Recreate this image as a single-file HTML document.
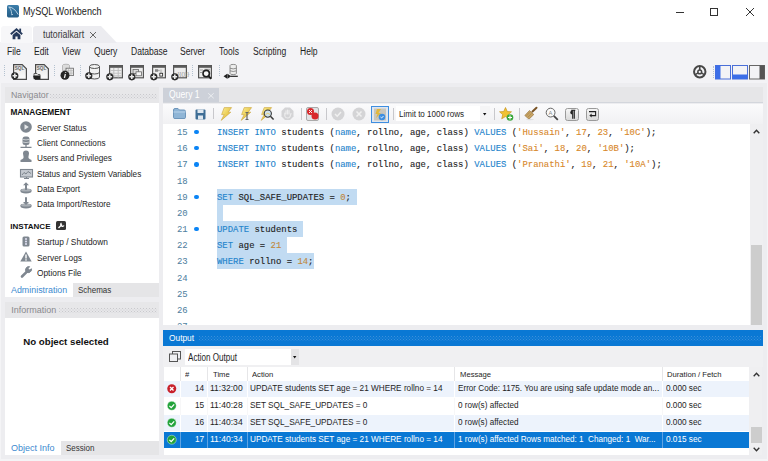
<!DOCTYPE html>
<html><head><meta charset="utf-8">
<style>
*{margin:0;padding:0;box-sizing:border-box}
html,body{width:768px;height:461px;overflow:hidden;background:#ebebee;font-family:"Liberation Sans",sans-serif;position:relative}
.a{position:absolute}
.t{position:absolute;white-space:nowrap}
svg{overflow:visible}
</style></head><body>
<div class="a" style="left:0px;top:0px;width:768px;height:26px;background:#ffffff;"></div>
<div class="a" style="left:0px;top:26px;width:768px;height:16px;background:#ffffff;"></div>
<div class="a" style="left:0px;top:42px;width:768px;height:41px;background:#f3f3f6;"></div>
<div class="a" style="left:0px;top:83px;width:768px;height:378px;background:#ededf0;"></div>
<div class="a" style="left:0px;top:83px;width:1.3px;height:378px;background:#f4f4f6;"></div>
<div class="a" style="left:0px;top:459px;width:768px;height:2px;background:#f4f4f6;"></div>
<div class="a" style="left:766.5px;top:83px;width:1.5px;height:378px;background:#f4f4f6;"></div>
<svg class="a" style="left:7px;top:5px;" width="12" height="12.4" viewBox="0 0 12 12.4"><defs><linearGradient id="lg0" x1="0" y1="0" x2="0" y2="1"><stop offset="0" stop-color="#3c7eab"/><stop offset="1" stop-color="#255d86"/></linearGradient></defs><rect x="0" y="0" width="12" height="12.4" rx="1.6" fill="url(#lg0)"/><path d="M1.6 2 Q7 2 11.2 9.6" stroke="#c9dcea" stroke-width="0.9" fill="none"/><path d="M2 2.2 Q3.8 4 4.4 6.5 Q4.6 9 4.8 10 L6 9.2" stroke="#c9dcea" stroke-width="0.8" fill="none"/></svg>
<div class="t" style="left:23px;top:6.46px;font-size:10.8px;line-height:10.8px;color:#1a1a1a;font-weight:400;font-family:'Liberation Sans',sans-serif;transform:scaleX(0.845);transform-origin:0 0;">MySQL Workbench</div>
<div class="a" style="left:676px;top:11.5px;width:8px;height:1px;background:#333;"></div>
<div class="a" style="left:710px;top:7.5px;width:8px;height:8px;background:transparent;border:1px solid #333;"></div>
<svg class="a" style="left:745px;top:7px;" width="10" height="10" viewBox="0 0 10 10"><path d="M1 1 L9 9 M9 1 L1 9" stroke="#333" stroke-width="1"/></svg>
<div class="a" style="left:1px;top:26px;width:31px;height:17px;background:#f7f7f9;border-radius:3px 3px 0 0;"></div>
<svg class="a" style="left:33px;top:26px;" width="85" height="17" viewBox="0 0 85 17"><path d="M0 3 Q0 0 3 0 L68 0 L84 17 L0 17 Z" fill="#ececf0"/></svg>
<svg class="a" style="left:10.3px;top:27.6px;" width="13" height="11.5" viewBox="0 0 13 11.5"><path d="M0.8 6.2 L6.5 1.2 L12.2 6.2" stroke="#263a5c" stroke-width="1.9" fill="none"/><rect x="9.3" y="0.6" width="1.8" height="3.4" fill="#263a5c"/><path d="M2.6 7 L6.5 3.7 L10.4 7 V11.3 H7.6 V8.6 H5.4 V11.3 H2.6 Z" fill="#263a5c"/></svg>
<div class="t" style="left:43px;top:29.54px;font-size:10px;line-height:10px;color:#3a3a3a;font-weight:400;font-family:'Liberation Sans',sans-serif;transform:scaleX(0.88);transform-origin:0 0;">tutorialkart</div>
<svg class="a" style="left:89px;top:31px;" width="8" height="8" viewBox="0 0 8 8"><path d="M1 1 L7 7 M7 1 L1 7" stroke="#666" stroke-width="1"/></svg>
<div class="t" style="left:6.6px;top:46.73px;font-size:10px;line-height:10px;color:#1e1e1e;font-weight:400;font-family:'Liberation Sans',sans-serif;transform:scaleX(0.855);transform-origin:0 0;">File</div>
<div class="t" style="left:34.0px;top:46.73px;font-size:10px;line-height:10px;color:#1e1e1e;font-weight:400;font-family:'Liberation Sans',sans-serif;transform:scaleX(0.855);transform-origin:0 0;">Edit</div>
<div class="t" style="left:62.1px;top:46.73px;font-size:10px;line-height:10px;color:#1e1e1e;font-weight:400;font-family:'Liberation Sans',sans-serif;transform:scaleX(0.855);transform-origin:0 0;">View</div>
<div class="t" style="left:93.6px;top:46.73px;font-size:10px;line-height:10px;color:#1e1e1e;font-weight:400;font-family:'Liberation Sans',sans-serif;transform:scaleX(0.855);transform-origin:0 0;">Query</div>
<div class="t" style="left:130.6px;top:46.73px;font-size:10px;line-height:10px;color:#1e1e1e;font-weight:400;font-family:'Liberation Sans',sans-serif;transform:scaleX(0.855);transform-origin:0 0;">Database</div>
<div class="t" style="left:180.1px;top:46.73px;font-size:10px;line-height:10px;color:#1e1e1e;font-weight:400;font-family:'Liberation Sans',sans-serif;transform:scaleX(0.855);transform-origin:0 0;">Server</div>
<div class="t" style="left:219.2px;top:46.73px;font-size:10px;line-height:10px;color:#1e1e1e;font-weight:400;font-family:'Liberation Sans',sans-serif;transform:scaleX(0.855);transform-origin:0 0;">Tools</div>
<div class="t" style="left:253.2px;top:46.73px;font-size:10px;line-height:10px;color:#1e1e1e;font-weight:400;font-family:'Liberation Sans',sans-serif;transform:scaleX(0.855);transform-origin:0 0;">Scripting</div>
<div class="t" style="left:299.6px;top:46.73px;font-size:10px;line-height:10px;color:#1e1e1e;font-weight:400;font-family:'Liberation Sans',sans-serif;transform:scaleX(0.855);transform-origin:0 0;">Help</div>
<div class="a" style="left:3.5px;top:64.5px;width:1px;height:11.0px;border-left:1px dotted #b4c2d0"></div>
<div class="a" style="left:54px;top:64.5px;width:1px;height:11.0px;border-left:1px dotted #b4c2d0"></div>
<div class="a" style="left:79.5px;top:64.5px;width:1px;height:11.0px;border-left:1px dotted #b4c2d0"></div>
<div class="a" style="left:192px;top:64.5px;width:1px;height:11.0px;border-left:1px dotted #b4c2d0"></div>
<div class="a" style="left:218.5px;top:64.5px;width:1px;height:11.0px;border-left:1px dotted #b4c2d0"></div>
<div class="a" style="left:713px;top:65.5px;width:1px;height:12.0px;border-left:1px dotted #b4c2d0"></div>
<svg class="a" style="left:13.2px;top:64px;" width="14" height="16" viewBox="0 0 14 16"><defs><linearGradient id="dg" x1="0" y1="0" x2="0" y2="1"><stop offset="0" stop-color="#e6e6e6"/><stop offset="1" stop-color="#fafafa"/></linearGradient></defs><path d="M0.6 0.6 L9.2 0.6 L13.4 4.8 L13.4 15.4 L0.6 15.4 Z" fill="url(#dg)" stroke="#4a4a4a" stroke-width="1.2"/><text x="1.8" y="5.6" font-size="4.6" font-weight="bold" font-family="Liberation Sans" fill="#666">SQL</text></svg>
<svg class="a" style="left:11.4px;top:71.8px;" width="7.6" height="7.6" viewBox="0 0 7.6 7.6"><circle cx="3.8" cy="3.8" r="3.5999999999999996" fill="#2a2a2a"/><path d="M3.8 1.5 V6.1 M1.5 3.8 H6.1" stroke="#e8e8e8" stroke-width="1.6"/></svg>
<svg class="a" style="left:34.6px;top:64px;" width="14" height="16" viewBox="0 0 14 16"><defs><linearGradient id="dg" x1="0" y1="0" x2="0" y2="1"><stop offset="0" stop-color="#e6e6e6"/><stop offset="1" stop-color="#fafafa"/></linearGradient></defs><path d="M0.6 0.6 L9.2 0.6 L13.4 4.8 L13.4 15.4 L0.6 15.4 Z" fill="url(#dg)" stroke="#4a4a4a" stroke-width="1.2"/><text x="1.8" y="5.6" font-size="4.6" font-weight="bold" font-family="Liberation Sans" fill="#666">SQL</text></svg>
<svg class="a" style="left:33px;top:72.5px;" width="8" height="6.5" viewBox="0 0 8 6.5"><path d="M1 0.5 H4 L5 1.5 H7 V3 H1 Z" fill="#e6e6e6" stroke="#333" stroke-width="0.7"/><path d="M0 2.8 H7.5 V6.3 H0.8 Z" fill="#222"/></svg>
<svg class="a" style="left:59.5px;top:64px;" width="14" height="16" viewBox="0 0 14 16"><path d="M2.5 1.5 Q2.5 0.2 6 0.2 Q9.5 0.2 9.5 1.5 V6.5 H2.5 Z" fill="#dcdcdc" stroke="#999" stroke-width="0.6"/><rect x="6" y="4.2" width="7.4" height="7.4" fill="#eaeaea" stroke="#666" stroke-width="0.8"/><path d="M8.5 4.5 V11.5 M11 4.5 V11.5 M6 6.7 H13.4 M6 9.1 H13.4" stroke="#aaa" stroke-width="0.6"/><circle cx="5" cy="11.2" r="4.5" fill="#262626"/><path d="M5.6 8.2 V8.9 M5.4 10 L4.4 14" stroke="#f0f0f0" stroke-width="1.3"/></svg>
<svg class="a" style="left:86px;top:64px;" width="15" height="16" viewBox="0 0 15 16"><path d="M3.5 2.5 Q3.5 0.5 8.5 0.5 Q13.5 0.5 13.5 2.5 V13 Q13.5 15 8.5 15 Q3.5 15 3.5 13 Z" fill="#f2f2f2" stroke="#555"/><path d="M3.5 2.5 Q3.5 4.5 8.5 4.5 Q13.5 4.5 13.5 2.5 M3.5 8 Q3.5 10 8.5 10 Q13.5 10 13.5 8" fill="none" stroke="#555"/></svg>
<svg class="a" style="left:85.4px;top:72px;" width="7.6" height="7.6" viewBox="0 0 7.6 7.6"><circle cx="3.8" cy="3.8" r="3.5999999999999996" fill="#2a2a2a"/><path d="M3.8 1.5 V6.1 M1.5 3.8 H6.1" stroke="#e8e8e8" stroke-width="1.6"/></svg>
<svg class="a" style="left:109px;top:65px;" width="14" height="13" viewBox="0 0 14 13"><rect x="0.6" y="0.6" width="12.8" height="12.2" fill="#ededed" stroke="#555" stroke-width="1.2"/><rect x="0.6" y="0.6" width="12.8" height="2.2" fill="#5a5a5a"/><path d="M1.5 5.5 H12.5 M1.5 8.2 H12.5 M1.5 10.9 H12.5" stroke="#c4c4c4" stroke-width="1.1"/><path d="M4.8 3 V12.5 M9.2 3 V12.5" stroke="#bdbdbd" stroke-width="1"/></svg>
<svg class="a" style="left:106.4px;top:72.6px;" width="7.6" height="7.6" viewBox="0 0 7.6 7.6"><circle cx="3.8" cy="3.8" r="3.5999999999999996" fill="#2a2a2a"/><path d="M3.8 1.5 V6.1 M1.5 3.8 H6.1" stroke="#e8e8e8" stroke-width="1.6"/></svg>
<svg class="a" style="left:130.2px;top:65px;" width="14" height="13" viewBox="0 0 14 13"><rect x="0.6" y="0.6" width="12.8" height="12.2" fill="#ededed" stroke="#555" stroke-width="1.2"/><rect x="0.6" y="0.6" width="12.8" height="2.2" fill="#5a5a5a"/><rect x="3" y="4.5" width="5.5" height="4" fill="#dcdcdc" stroke="#666" stroke-width="0.8"/><rect x="6" y="6.8" width="5.5" height="4" fill="#f4f4f4" stroke="#666" stroke-width="0.8"/></svg>
<svg class="a" style="left:128.1px;top:72.6px;" width="7.6" height="7.6" viewBox="0 0 7.6 7.6"><circle cx="3.8" cy="3.8" r="3.5999999999999996" fill="#2a2a2a"/><path d="M3.8 1.5 V6.1 M1.5 3.8 H6.1" stroke="#e8e8e8" stroke-width="1.6"/></svg>
<svg class="a" style="left:152.2px;top:65px;" width="14" height="13" viewBox="0 0 14 13"><rect x="0.6" y="0.6" width="12.8" height="12.2" fill="#ededed" stroke="#555" stroke-width="1.2"/><rect x="0.6" y="0.6" width="12.8" height="2.2" fill="#5a5a5a"/><rect x="3" y="4.2" width="3.2" height="2.6" fill="#888"/><rect x="7.6" y="4.4" width="2.6" height="2.4" fill="#c8c8c8"/><path d="M6.2 5.5 H7.6 M9 6.8 V8.3" stroke="#888" stroke-width="0.7"/><rect x="7.8" y="8.3" width="2.8" height="2.8" fill="#fff" stroke="#333" stroke-width="0.9"/></svg>
<svg class="a" style="left:149.8px;top:72.6px;" width="7.6" height="7.6" viewBox="0 0 7.6 7.6"><circle cx="3.8" cy="3.8" r="3.5999999999999996" fill="#2a2a2a"/><path d="M3.8 1.5 V6.1 M1.5 3.8 H6.1" stroke="#e8e8e8" stroke-width="1.6"/></svg>
<svg class="a" style="left:173.3px;top:65px;" width="14" height="13" viewBox="0 0 14 13"><rect x="0.6" y="0.6" width="12.8" height="12.2" fill="#ededed" stroke="#555" stroke-width="1.2"/><rect x="0.6" y="0.6" width="12.8" height="2.2" fill="#5a5a5a"/><text x="4.2" y="10.6" font-size="6" font-family="Liberation Sans" fill="#888">{{()}}</text></svg>
<svg class="a" style="left:170.9px;top:72.6px;" width="7.6" height="7.6" viewBox="0 0 7.6 7.6"><circle cx="3.8" cy="3.8" r="3.5999999999999996" fill="#2a2a2a"/><path d="M3.8 1.5 V6.1 M1.5 3.8 H6.1" stroke="#e8e8e8" stroke-width="1.6"/></svg>
<svg class="a" style="left:198px;top:65px;" width="14" height="15" viewBox="0 0 14 15"><rect x="0.6" y="0.6" width="12.8" height="12.2" fill="#ededed" stroke="#555" stroke-width="1.2"/><rect x="0.6" y="0.6" width="12.8" height="2.2" fill="#5a5a5a"/><path d="M2 5 H5 M2 7.5 H4 M6.5 4.3 H12" stroke="#888" stroke-width="0.8"/><circle cx="8.2" cy="8.6" r="3.2" fill="#f8f8f8" stroke="#1e1e1e" stroke-width="1.6"/><path d="M10.4 10.9 L13.2 13.8" stroke="#1e1e1e" stroke-width="1.8"/></svg>
<svg class="a" style="left:223px;top:64px;" width="15" height="16" viewBox="0 0 15 16"><path d="M7 1.6 Q7 0.4 10.2 0.4 Q13.4 0.4 13.4 1.6 V9.4 Q13.4 10.6 10.2 10.6 Q7 10.6 7 9.4 Z" fill="#ededed" stroke="#777" stroke-width="0.8"/><path d="M7 4.2 Q10.2 5.6 13.4 4.2 M7 6.8 Q10.2 8.2 13.4 6.8" fill="none" stroke="#777" stroke-width="0.8"/><path d="M0.5 12.3 L4.2 9.8 V14.8 Z M8.2 12.3 L4.5 9.8 V14.8 Z" fill="#222"/><path d="M7.5 12.3 H14.8" stroke="#222" stroke-width="1.2"/></svg>
<svg class="a" style="left:693px;top:65px;" width="13.5" height="13.5" viewBox="0 0 13.5 13.5"><circle cx="6.75" cy="6.75" r="5.7" fill="none" stroke="#474747" stroke-width="2"/><circle cx="6.75" cy="6.9" r="1.9" fill="#f3f3f6" stroke="#474747" stroke-width="1.5"/><path d="M6.75 1.5 V5 M2.2 9.6 L5.2 7.9 M11.3 9.6 L8.3 7.9" stroke="#474747" stroke-width="1.6"/></svg>
<svg class="a" style="left:715px;top:65px;" width="17" height="15" viewBox="0 0 17 15"><rect x="0.5" y="0.5" width="15" height="13.5" fill="#f3f3f6" stroke="#4a6fd8"/><rect x="0.5" y="0.5" width="5" height="13.5" fill="#3c6ee8"/></svg>
<svg class="a" style="left:732px;top:65px;" width="17" height="15" viewBox="0 0 17 15"><rect x="0.5" y="0.5" width="15" height="13.5" fill="#f3f3f6" stroke="#4a6fd8"/><rect x="0.5" y="9.5" width="15" height="4.5" fill="#3c6ee8"/></svg>
<svg class="a" style="left:749px;top:65px;" width="17" height="15" viewBox="0 0 17 15"><rect x="0.5" y="0.5" width="15" height="13.5" fill="#f3f3f6" stroke="#666"/><rect x="10.5" y="0.5" width="5" height="13.5" fill="#555"/></svg>
<div class="a" style="left:5px;top:87.3px;width:154px;height:15.7px;background:#e7e7e9;"></div>
<svg class="a" style="left:49.5px;top:93.5px" width="107" height="5"><defs><pattern id="p54" width="3" height="3" patternUnits="userSpaceOnUse"><rect x="0" y="0" width="1" height="1" fill="#c9c9cd"/><rect x="1.5" y="1.5" width="1" height="1" fill="#c9c9cd"/></pattern></defs><rect width="107" height="5" fill="url(#p54)"/></svg>
<div class="t" style="left:11px;top:90.75px;font-size:8.8px;line-height:8.8px;color:#8a8a8e;font-weight:400;font-family:'Liberation Sans',sans-serif;">Navigator</div>
<div class="a" style="left:5px;top:103px;width:154px;height:180px;background:#ffffff;"></div>
<div class="t" style="left:10.4px;top:107.87px;font-size:8.3px;line-height:8.3px;color:#111;font-weight:700;font-family:'Liberation Sans',sans-serif;">MANAGEMENT</div>
<div class="t" style="left:37px;top:124.22px;font-size:8.6px;line-height:8.6px;color:#1e1e1e;font-weight:400;font-family:'Liberation Sans',sans-serif;transform:scaleX(0.95);transform-origin:0 0;">Server Status</div>
<div class="t" style="left:37px;top:139.12px;font-size:8.6px;line-height:8.6px;color:#1e1e1e;font-weight:400;font-family:'Liberation Sans',sans-serif;transform:scaleX(0.95);transform-origin:0 0;">Client Connections</div>
<div class="t" style="left:37px;top:154.02px;font-size:8.6px;line-height:8.6px;color:#1e1e1e;font-weight:400;font-family:'Liberation Sans',sans-serif;transform:scaleX(0.95);transform-origin:0 0;">Users and Privileges</div>
<div class="t" style="left:37px;top:169.72px;font-size:8.6px;line-height:8.6px;color:#1e1e1e;font-weight:400;font-family:'Liberation Sans',sans-serif;transform:scaleX(0.95);transform-origin:0 0;">Status and System Variables</div>
<div class="t" style="left:37px;top:184.92px;font-size:8.6px;line-height:8.6px;color:#1e1e1e;font-weight:400;font-family:'Liberation Sans',sans-serif;transform:scaleX(0.95);transform-origin:0 0;">Data Export</div>
<div class="t" style="left:37px;top:200.32px;font-size:8.6px;line-height:8.6px;color:#1e1e1e;font-weight:400;font-family:'Liberation Sans',sans-serif;transform:scaleX(0.95);transform-origin:0 0;">Data Import/Restore</div>
<div class="t" style="left:10.2px;top:222.63px;font-size:8px;line-height:8px;color:#111;font-weight:700;font-family:'Liberation Sans',sans-serif;">INSTANCE</div>
<div class="t" style="left:37px;top:238.42px;font-size:8.6px;line-height:8.6px;color:#1e1e1e;font-weight:400;font-family:'Liberation Sans',sans-serif;transform:scaleX(0.97);transform-origin:0 0;">Startup / Shutdown</div>
<div class="t" style="left:37px;top:253.72px;font-size:8.6px;line-height:8.6px;color:#1e1e1e;font-weight:400;font-family:'Liberation Sans',sans-serif;transform:scaleX(0.97);transform-origin:0 0;">Server Logs</div>
<div class="t" style="left:37px;top:269.02px;font-size:8.6px;line-height:8.6px;color:#1e1e1e;font-weight:400;font-family:'Liberation Sans',sans-serif;transform:scaleX(0.97);transform-origin:0 0;">Options File</div>
<svg class="a" style="left:20px;top:121px;" width="12" height="12" viewBox="0 0 12 12"><circle cx="6" cy="6" r="5.8" fill="#7f8790"/><path d="M4.5 3.3 L8.8 6 L4.5 8.7 Z" fill="#e6e8ea"/></svg>
<svg class="a" style="left:20px;top:135.5px;" width="12" height="13" viewBox="0 0 12 13"><rect x="2.5" y="0.5" width="7" height="8.5" rx="2.5" fill="#7f8790"/><path d="M2.5 3.3 Q6 4.5 9.5 3.3 M2.5 6 Q6 7.2 9.5 6" stroke="#e4e6e8" stroke-width="0.7" fill="none"/><path d="M6 9 V11 M0.5 11.3 H11.5" stroke="#7f8790" stroke-width="1.3"/></svg>
<svg class="a" style="left:20px;top:150px;" width="12" height="13" viewBox="0 0 12 13"><circle cx="6" cy="3.5" r="3" fill="#7f8790"/><path d="M3.5 5 Q4 8 2.5 9 L0.5 10 V12 H11.5 V10 L9.5 9 Q8 8 8.5 5 Z" fill="#7f8790"/></svg>
<svg class="a" style="left:19.6px;top:168.5px;" width="13" height="10" viewBox="0 0 13 10"><rect x="0.5" y="0.5" width="12" height="7.5" fill="#c5cad0" stroke="#7f8790" stroke-width="1.1"/><path d="M2 6 L4 3.5 L6 5 L8 2.5 L11 4.5" stroke="#6a727b" stroke-width="0.8" fill="none"/><path d="M6.5 8 V9.2 M4 9.5 H9" stroke="#7f8790" stroke-width="1.1"/></svg>
<svg class="a" style="left:20px;top:181.5px;" width="12" height="12" viewBox="0 0 12 12"><path d="M0.5 8.2 Q0.5 6.6 6 6.6 Q11.5 6.6 11.5 8.2 V9.6 Q11.5 11.4 6 11.4 Q0.5 11.4 0.5 9.6 Z" fill="#7f8790"/><ellipse cx="6" cy="8.2" rx="5" ry="1.4" fill="#aab0b6"/><path d="M6 0.3 L9 3.3 H7 V8 H5 V3.3 H3 Z" fill="#7f8790"/></svg>
<svg class="a" style="left:20px;top:196.5px;" width="12" height="12" viewBox="0 0 12 12"><path d="M0.5 8.2 Q0.5 6.6 6 6.6 Q11.5 6.6 11.5 8.2 V9.6 Q11.5 11.4 6 11.4 Q0.5 11.4 0.5 9.6 Z" fill="#7f8790"/><ellipse cx="6" cy="8.2" rx="5" ry="1.4" fill="#aab0b6"/><path d="M6 8 L9 5 H7 V0.3 H5 V5 H3 Z" fill="#7f8790"/></svg>
<svg class="a" style="left:55.5px;top:221px;" width="10" height="9" viewBox="0 0 10 9"><rect x="0" y="0" width="10" height="9" rx="1.5" fill="#333"/><path d="M2.5 7 L6 3.5 M5.5 2 A1.8 1.8 0 1 0 8 4.5" stroke="#fff" stroke-width="1.3" fill="none"/></svg>
<svg class="a" style="left:21.5px;top:236px;" width="8" height="11" viewBox="0 0 8 11"><rect x="0.5" y="0.5" width="7" height="10" rx="1.5" fill="#7f8790"/><circle cx="4" cy="3" r="1.1" fill="#dde"/><circle cx="4" cy="5.5" r="1.1" fill="#dde"/><circle cx="4" cy="8" r="1.1" fill="#dde"/></svg>
<svg class="a" style="left:20px;top:251px;" width="12" height="11" viewBox="0 0 12 11"><path d="M6 0.5 L11.7 10.5 H0.3 Z" fill="#7f8790"/><rect x="5.3" y="3.5" width="1.4" height="4" fill="#fff"/><rect x="5.3" y="8.3" width="1.4" height="1.3" fill="#fff"/></svg>
<svg class="a" style="left:19.7px;top:265.9px;" width="13" height="12" viewBox="0 0 13 12"><path d="M2 10.5 L7.2 5.3" stroke="#7f8790" stroke-width="2.6" stroke-linecap="round"/><path d="M6.2 6 A3.4 3.4 0 0 1 9.6 0.6 L8.2 2.6 L9.4 4 L11.6 2.8 A3.4 3.4 0 0 1 6.2 6 Z" fill="#7f8790" stroke="#7f8790" stroke-width="0.9" stroke-linejoin="round"/></svg>
<div class="a" style="left:5px;top:283px;width:68px;height:14px;background:#ffffff;"></div>
<div class="a" style="left:73px;top:283px;width:86px;height:14px;background:#e5e5e7;"></div>
<div class="t" style="left:11px;top:285.57px;font-size:8.9px;line-height:8.9px;color:#3d8ad0;font-weight:400;font-family:'Liberation Sans',sans-serif;">Administration</div>
<div class="t" style="left:78.4px;top:285.82px;font-size:8.6px;line-height:8.6px;color:#333;font-weight:400;font-family:'Liberation Sans',sans-serif;transform:scaleX(0.93);transform-origin:0 0;">Schemas</div>
<div class="a" style="left:5px;top:302px;width:154px;height:15.5px;background:#e7e7e9;"></div>
<svg class="a" style="left:59px;top:308px" width="98" height="5"><defs><pattern id="p83" width="3" height="3" patternUnits="userSpaceOnUse"><rect x="0" y="0" width="1" height="1" fill="#c9c9cd"/><rect x="1.5" y="1.5" width="1" height="1" fill="#c9c9cd"/></pattern></defs><rect width="98" height="5" fill="url(#p83)"/></svg>
<div class="t" style="left:11.2px;top:305.68px;font-size:9px;line-height:9px;color:#8a8a8e;font-weight:400;font-family:'Liberation Sans',sans-serif;">Information</div>
<div class="a" style="left:5px;top:317.5px;width:154px;height:124px;background:#ffffff;"></div>
<div class="t" style="left:23.2px;top:336.69px;font-size:9.7px;line-height:9.7px;color:#111;font-weight:700;font-family:'Liberation Sans',sans-serif;">No object selected</div>
<div class="a" style="left:5px;top:441px;width:56px;height:14px;background:#ffffff;"></div>
<div class="a" style="left:61px;top:441px;width:98px;height:14px;background:#e5e5e7;"></div>
<div class="t" style="left:11px;top:443.78px;font-size:9px;line-height:9px;color:#3d8ad0;font-weight:400;font-family:'Liberation Sans',sans-serif;">Object Info</div>
<div class="t" style="left:66.4px;top:444.12px;font-size:8.6px;line-height:8.6px;color:#333;font-weight:400;font-family:'Liberation Sans',sans-serif;transform:scaleX(0.93);transform-origin:0 0;">Session</div>
<div class="a" style="left:163px;top:87.3px;width:599.5px;height:15.5px;background:#e6e6e8;"></div>
<div class="a" style="left:163.4px;top:87.5px;width:55.8px;height:15.2px;background:#cdd1d9;"></div>
<div class="t" style="left:168.8px;top:89.77px;font-size:10.2px;line-height:10.2px;color:#ffffff;font-weight:400;font-family:'Liberation Sans',sans-serif;transform:scaleX(0.845);transform-origin:0 0;">Query 1</div>
<svg class="a" style="left:208.3px;top:92.9px;" width="6" height="5.5" viewBox="0 0 6 5.5"><path d="M0.3 0.3 L5.7 5.2 M5.7 0.3 L0.3 5.2" stroke="#eef0f3" stroke-width="0.9"/></svg>
<div class="a" style="left:163px;top:102.3px;width:599.5px;height:1.2px;background:#d3d6dc;"></div>
<div class="a" style="left:163px;top:103.5px;width:599.5px;height:20.5px;background:linear-gradient(#fbfbfc,#f1f1f3)"></div>
<svg class="a" style="left:173px;top:108px;" width="13" height="11" viewBox="0 0 13 11"><path d="M0.5 2 Q0.5 0.5 2 0.5 H5 L6.5 2 H11 Q12.5 2 12.5 3.5 V9.5 Q12.5 10.5 11 10.5 H2 Q0.5 10.5 0.5 9.5 Z" fill="#8fb5d6" stroke="#6e96bb"/><path d="M0.5 4 H12.5" stroke="#b9d3ea"/></svg>
<svg class="a" style="left:194.5px;top:109px;" width="11" height="11" viewBox="0 0 11 11"><rect x="0.5" y="0.5" width="10" height="10" rx="1" fill="#3f6e96"/><rect x="2.5" y="0.5" width="6" height="3.5" fill="#dfe8f0"/><rect x="3" y="6.5" width="5" height="4" fill="#dfe8f0"/></svg>
<div class="a" style="left:213px;top:108px;width:1px;height:11px;background:#c8c8cc;"></div>
<svg class="a" style="left:220px;top:107px;" width="13" height="14" viewBox="0 0 13 14"><defs><linearGradient id="bg1" x1="0" y1="0" x2="1" y2="1"><stop offset="0" stop-color="#fbef9a"/><stop offset="0.6" stop-color="#e9c84a"/><stop offset="1" stop-color="#c9a02a"/></linearGradient></defs><path d="M4.2 0.6 H11.6 L8.2 5.2 H10.8 L1.2 13.4 L4.2 7.6 H1.6 Z" fill="url(#bg1)" stroke="#c9a23a" stroke-width="0.6"/></svg>
<svg class="a" style="left:240px;top:107px;" width="13" height="14" viewBox="0 0 13 14"><defs><linearGradient id="bg1" x1="0" y1="0" x2="1" y2="1"><stop offset="0" stop-color="#fbef9a"/><stop offset="0.6" stop-color="#e9c84a"/><stop offset="1" stop-color="#c9a02a"/></linearGradient></defs><path d="M4.2 0.6 H11.6 L8.2 5.2 H10.8 L1.2 13.4 L4.2 7.6 H1.6 Z" fill="url(#bg1)" stroke="#c9a23a" stroke-width="0.6"/><path d="M5.5 5.5 H8.5 M7 5.5 V12.5 M5.5 12.5 H8.5" stroke="#666" stroke-width="1.2"/></svg>
<svg class="a" style="left:260px;top:107px;" width="15" height="14" viewBox="0 0 15 14"><defs><linearGradient id="bg1" x1="0" y1="0" x2="1" y2="1"><stop offset="0" stop-color="#fbef9a"/><stop offset="0.6" stop-color="#e9c84a"/><stop offset="1" stop-color="#c9a02a"/></linearGradient></defs><path d="M4.2 0.6 H11.6 L8.2 5.2 H10.8 L1.2 13.4 L4.2 7.6 H1.6 Z" fill="url(#bg1)" stroke="#c9a23a" stroke-width="0.6"/><circle cx="7.8" cy="6.6" r="3.6" fill="#cfe2ee" stroke="#3a3a3a" stroke-width="1.1"/><path d="M5.5 7.5 Q7.8 5 10 7.5" stroke="#e8d070" stroke-width="1" fill="none"/><path d="M10.4 9.3 L13.6 12.6" stroke="#3a3a3a" stroke-width="1.5"/></svg>
<svg class="a" style="left:281px;top:107px;" width="13" height="14" viewBox="0 0 13 14"><path d="M4 0.5 H9 L12.5 4 V9.5 L9 13 H4 L0.5 9.5 V4 Z" fill="#d4d4d6"/><path d="M3.8 6 V9 Q4.2 11 6.5 11 Q9 11 9.2 9 L10 6.5 M5 3.8 V7 M6.5 3 V7 M8 3.5 V7" stroke="#ededee" stroke-width="1.1" fill="none" stroke-linecap="round"/></svg>
<div class="a" style="left:301px;top:108px;width:1px;height:12px;background:#c8c8cc;"></div>
<svg class="a" style="left:306px;top:107px;" width="13" height="14" viewBox="0 0 13 14"><rect x="0.5" y="0.5" width="12" height="13" rx="1.5" fill="#e2e2e4" stroke="#aaa"/><circle cx="4.5" cy="4.5" r="3.5" fill="#d8282b"/><circle cx="9" cy="9" r="3.5" fill="#d8282b"/><path d="M3 3 L6 6 M6 3 L3 6" stroke="#fff" stroke-width="0.9"/></svg>
<div class="a" style="left:326px;top:108px;width:1px;height:12px;background:#c8c8cc;"></div>
<svg class="a" style="left:331px;top:107px;" width="14" height="14" viewBox="0 0 14 14"><circle cx="7" cy="7" r="6.5" fill="#d4d4d6"/><path d="M4 7 L6.2 9.2 L10 5" stroke="#f0f0f0" stroke-width="1.5" fill="none"/></svg>
<svg class="a" style="left:352px;top:107px;" width="14" height="14" viewBox="0 0 14 14"><circle cx="7" cy="7" r="6.5" fill="#d4d4d6"/><path d="M4.5 4.5 L9.5 9.5 M9.5 4.5 L4.5 9.5" stroke="#f0f0f0" stroke-width="1.5"/></svg>
<svg class="a" style="left:371px;top:106px;" width="18" height="17" viewBox="0 0 18 17"><rect x="0.5" y="0.5" width="17" height="16" fill="#dfe6ef" stroke="#3e8ee0"/><rect x="3" y="2.5" width="12" height="12" fill="#c9c6bd"/><path d="M6 3 H10 L7.5 7 H10 L5 12 L6.5 8 H4.5 Z" fill="#e0b83e"/><circle cx="11" cy="11" r="3.3" fill="#3e8ee0"/><path d="M9.5 11 L10.6 12 L12.5 10" stroke="#fff" stroke-width="0.9" fill="none"/></svg>
<div class="a" style="left:393px;top:108px;width:1px;height:12px;background:#c8c8cc;"></div>
<div class="a" style="left:396.4px;top:105.6px;width:93.2px;height:15.7px;background:#ffffff;"></div>
<div class="a" style="left:480px;top:105.6px;width:9.6px;height:15.7px;background:#f5f5f6;"></div>
<div class="t" style="left:399px;top:109.47px;font-size:9.6px;line-height:9.6px;color:#1e1e1e;font-weight:400;font-family:'Liberation Sans',sans-serif;transform:scaleX(0.835);transform-origin:0 0;">Limit to 1000 rows</div>
<svg class="a" style="left:482.6px;top:112.8px;" width="3.4" height="2.4" viewBox="0 0 3.4 2.4"><path d="M0 0 H3.4 L1.7 2.4 Z" fill="#111"/></svg>
<div class="a" style="left:493.5px;top:108px;width:1px;height:12px;background:#c8c8cc;"></div>
<svg class="a" style="left:499px;top:107px;" width="15" height="14" viewBox="0 0 15 14"><path d="M6.5 0.5 L8.3 4.5 L12.5 4.8 L9.3 7.6 L10.3 11.8 L6.5 9.6 L2.7 11.8 L3.7 7.6 L0.5 4.8 L4.7 4.5 Z" fill="#f0c232" stroke="#c08a10" stroke-width="0.6"/><circle cx="11" cy="10.5" r="3.3" fill="#3aa83a"/><path d="M11 8.5 V12.5 M9 10.5 H13" stroke="#fff" stroke-width="1.1"/></svg>
<div class="a" style="left:519px;top:108px;width:1px;height:12px;background:#c8c8cc;"></div>
<svg class="a" style="left:524px;top:107px;" width="14" height="13" viewBox="0 0 14 13"><path d="M8.5 4.5 L12.5 0.8" stroke="#7a5426" stroke-width="2" stroke-linecap="round"/><path d="M0.8 8.5 L5.5 3.5 L9.8 7.5 L5 12.2 Z" fill="#c8a464" stroke="#8f6b36" stroke-width="0.6"/><path d="M2.5 8.8 L6 5.2 M4 10 L7.5 6.4" stroke="#a5834a" stroke-width="0.6"/><ellipse cx="6" cy="12.6" rx="4" ry="0.6" fill="#ddd"/></svg>
<svg class="a" style="left:544.5px;top:107px;" width="14" height="14" viewBox="0 0 14 14"><circle cx="5.6" cy="5.6" r="4.4" fill="#fafafa" stroke="#666" stroke-width="1"/><text x="3.4" y="7.9" font-size="5.8" font-family="Liberation Sans" fill="#888">A</text><path d="M8.8 8.8 L12.8 12.8" stroke="#444" stroke-width="1.8"/></svg>
<svg class="a" style="left:565px;top:108px;" width="14" height="13" viewBox="0 0 14 13"><defs><linearGradient id="btg" x1="0" y1="0" x2="0" y2="1"><stop offset="0" stop-color="#f6f6f6"/><stop offset="1" stop-color="#d9d9d9"/></linearGradient></defs><rect x="0.5" y="0.5" width="13" height="12" rx="2" fill="url(#btg)" stroke="#9a9a9a"/><path d="M6.2 2.3 H10.3 M7.7 2.3 V10.8 M9.3 2.3 V10.8" stroke="#222" stroke-width="1.1"/><path d="M7.4 2.3 A2.1 2.1 0 0 0 7.4 6.5 Z" fill="#222"/></svg>
<svg class="a" style="left:586px;top:108px;" width="13" height="13" viewBox="0 0 13 13"><rect x="0.5" y="0.5" width="12" height="12" rx="2" fill="url(#btg)" stroke="#9a9a9a"/><path d="M3 3.6 H9.6 V7.6 H4.6" stroke="#222" stroke-width="1.1" fill="none"/><path d="M5.6 5.6 L3.4 7.6 L5.6 9.6 Z" fill="#222"/></svg>
<div class="a" style="left:163px;top:124px;width:587px;height:200.5px;background:#ffffff;"></div>
<div class="a" style="left:750px;top:124px;width:12.5px;height:201px;background:#efeff1;"></div>
<svg class="a" style="left:753px;top:128.5px;" width="7" height="5" viewBox="0 0 7 5"><path d="M0.7 4.3 L3.5 1.2 L6.3 4.3" stroke="#333" stroke-width="1.4" fill="none"/></svg>
<div class="a" style="left:750.5px;top:245px;width:11.2px;height:80px;background:#cdcdcd;"></div>
<div class="t" style="left:177.2px;top:128.04px;font-size:9.6px;line-height:9.6px;color:#4f7f9f;font-weight:400;font-family:'Liberation Mono',monospace;transform:scaleX(0.9306);transform-origin:0 0;-webkit-text-stroke:0.05px currentColor;">15</div>
<div class="t" style="left:217.4px;top:128.04px;font-size:9.6px;line-height:9.6px;color:#1c1c1c;font-weight:400;font-family:'Liberation Mono',monospace;transform:scaleX(0.9306);transform-origin:0 0;white-space:pre;-webkit-text-stroke:0.12px currentColor;"><span style="color:#2484cc">INSERT INTO</span><span style="color:#1c1c1c"> students (</span><span style="color:#2484cc">name</span><span style="color:#1c1c1c">, rollno, age, class) </span><span style="color:#2484cc">VALUES</span><span style="color:#1c1c1c"> (</span><span style="color:#d8892c">&#x27;Hussain&#x27;</span><span style="color:#1c1c1c">, </span><span style="color:#d8892c">17</span><span style="color:#1c1c1c">, </span><span style="color:#d8892c">23</span><span style="color:#1c1c1c">, </span><span style="color:#d8892c">&#x27;10C&#x27;</span><span style="color:#1c1c1c">);</span></div>
<div class="a" style="left:194.3px;top:129.90px;width:4.4px;height:4.4px;border-radius:50%;background:#0a84f5"></div>
<div class="t" style="left:177.2px;top:144.22px;font-size:9.6px;line-height:9.6px;color:#4f7f9f;font-weight:400;font-family:'Liberation Mono',monospace;transform:scaleX(0.9306);transform-origin:0 0;-webkit-text-stroke:0.05px currentColor;">16</div>
<div class="t" style="left:217.4px;top:144.22px;font-size:9.6px;line-height:9.6px;color:#1c1c1c;font-weight:400;font-family:'Liberation Mono',monospace;transform:scaleX(0.9306);transform-origin:0 0;white-space:pre;-webkit-text-stroke:0.12px currentColor;"><span style="color:#2484cc">INSERT INTO</span><span style="color:#1c1c1c"> students (</span><span style="color:#2484cc">name</span><span style="color:#1c1c1c">, rollno, age, class) </span><span style="color:#2484cc">VALUES</span><span style="color:#1c1c1c"> (</span><span style="color:#d8892c">&#x27;Sai&#x27;</span><span style="color:#1c1c1c">, </span><span style="color:#d8892c">18</span><span style="color:#1c1c1c">, </span><span style="color:#d8892c">20</span><span style="color:#1c1c1c">, </span><span style="color:#d8892c">&#x27;10B&#x27;</span><span style="color:#1c1c1c">);</span></div>
<div class="a" style="left:194.3px;top:146.08px;width:4.4px;height:4.4px;border-radius:50%;background:#0a84f5"></div>
<div class="t" style="left:177.2px;top:160.40px;font-size:9.6px;line-height:9.6px;color:#4f7f9f;font-weight:400;font-family:'Liberation Mono',monospace;transform:scaleX(0.9306);transform-origin:0 0;-webkit-text-stroke:0.05px currentColor;">17</div>
<div class="t" style="left:217.4px;top:160.40px;font-size:9.6px;line-height:9.6px;color:#1c1c1c;font-weight:400;font-family:'Liberation Mono',monospace;transform:scaleX(0.9306);transform-origin:0 0;white-space:pre;-webkit-text-stroke:0.12px currentColor;"><span style="color:#2484cc">INSERT INTO</span><span style="color:#1c1c1c"> students (</span><span style="color:#2484cc">name</span><span style="color:#1c1c1c">, rollno, age, class) </span><span style="color:#2484cc">VALUES</span><span style="color:#1c1c1c"> (</span><span style="color:#d8892c">&#x27;Pranathi&#x27;</span><span style="color:#1c1c1c">, </span><span style="color:#d8892c">19</span><span style="color:#1c1c1c">, </span><span style="color:#d8892c">21</span><span style="color:#1c1c1c">, </span><span style="color:#d8892c">&#x27;10A&#x27;</span><span style="color:#1c1c1c">);</span></div>
<div class="a" style="left:194.3px;top:162.26px;width:4.4px;height:4.4px;border-radius:50%;background:#0a84f5"></div>
<div class="t" style="left:177.2px;top:176.58px;font-size:9.6px;line-height:9.6px;color:#4f7f9f;font-weight:400;font-family:'Liberation Mono',monospace;transform:scaleX(0.9306);transform-origin:0 0;-webkit-text-stroke:0.05px currentColor;">18</div>
<div class="t" style="left:217.4px;top:176.58px;font-size:9.6px;line-height:9.6px;color:#1c1c1c;font-weight:400;font-family:'Liberation Mono',monospace;transform:scaleX(0.9306);transform-origin:0 0;white-space:pre;-webkit-text-stroke:0.12px currentColor;"></div>
<div class="a" style="left:217.3px;top:188.9px;width:139.36px;height:16.05px;background:#c1dbf2;"></div>
<div class="t" style="left:177.2px;top:192.76px;font-size:9.6px;line-height:9.6px;color:#4f7f9f;font-weight:400;font-family:'Liberation Mono',monospace;transform:scaleX(0.9306);transform-origin:0 0;-webkit-text-stroke:0.05px currentColor;">19</div>
<div class="t" style="left:217.4px;top:192.76px;font-size:9.6px;line-height:9.6px;color:#1c1c1c;font-weight:400;font-family:'Liberation Mono',monospace;transform:scaleX(0.9306);transform-origin:0 0;white-space:pre;-webkit-text-stroke:0.12px currentColor;"><span style="color:#2484cc">SET</span><span style="color:#1c1c1c"> SQL_SAFE_UPDATES = </span><span style="color:#c0893e">0</span><span style="color:#1c1c1c">;</span></div>
<div class="a" style="left:194.3px;top:194.62px;width:4.4px;height:4.4px;border-radius:50%;background:#0a84f5"></div>
<div class="a" style="left:217.3px;top:204.9px;width:5.36px;height:16.05px;background:#c1dbf2;"></div>
<div class="t" style="left:177.2px;top:208.94px;font-size:9.6px;line-height:9.6px;color:#4f7f9f;font-weight:400;font-family:'Liberation Mono',monospace;transform:scaleX(0.9306);transform-origin:0 0;-webkit-text-stroke:0.05px currentColor;">20</div>
<div class="t" style="left:217.4px;top:208.94px;font-size:9.6px;line-height:9.6px;color:#1c1c1c;font-weight:400;font-family:'Liberation Mono',monospace;transform:scaleX(0.9306);transform-origin:0 0;white-space:pre;-webkit-text-stroke:0.12px currentColor;"></div>
<div class="a" style="left:217.3px;top:220.9px;width:85.76px;height:16.05px;background:#c1dbf2;"></div>
<div class="t" style="left:177.2px;top:225.12px;font-size:9.6px;line-height:9.6px;color:#4f7f9f;font-weight:400;font-family:'Liberation Mono',monospace;transform:scaleX(0.9306);transform-origin:0 0;-webkit-text-stroke:0.05px currentColor;">21</div>
<div class="t" style="left:217.4px;top:225.12px;font-size:9.6px;line-height:9.6px;color:#1c1c1c;font-weight:400;font-family:'Liberation Mono',monospace;transform:scaleX(0.9306);transform-origin:0 0;white-space:pre;-webkit-text-stroke:0.12px currentColor;"><span style="color:#2484cc">UPDATE</span><span style="color:#1c1c1c"> students</span></div>
<div class="a" style="left:194.3px;top:226.98px;width:4.4px;height:4.4px;border-radius:50%;background:#0a84f5"></div>
<div class="a" style="left:217.3px;top:236.9px;width:69.68px;height:16.05px;background:#c1dbf2;"></div>
<div class="t" style="left:177.2px;top:241.30px;font-size:9.6px;line-height:9.6px;color:#4f7f9f;font-weight:400;font-family:'Liberation Mono',monospace;transform:scaleX(0.9306);transform-origin:0 0;-webkit-text-stroke:0.05px currentColor;">22</div>
<div class="t" style="left:217.4px;top:241.30px;font-size:9.6px;line-height:9.6px;color:#1c1c1c;font-weight:400;font-family:'Liberation Mono',monospace;transform:scaleX(0.9306);transform-origin:0 0;white-space:pre;-webkit-text-stroke:0.12px currentColor;"><span style="color:#2484cc">SET</span><span style="color:#1c1c1c"> age = </span><span style="color:#c0893e">21</span></div>
<div class="a" style="left:217.3px;top:252.9px;width:96.48px;height:16.05px;background:#c1dbf2;"></div>
<div class="t" style="left:177.2px;top:257.48px;font-size:9.6px;line-height:9.6px;color:#4f7f9f;font-weight:400;font-family:'Liberation Mono',monospace;transform:scaleX(0.9306);transform-origin:0 0;-webkit-text-stroke:0.05px currentColor;">23</div>
<div class="t" style="left:217.4px;top:257.48px;font-size:9.6px;line-height:9.6px;color:#1c1c1c;font-weight:400;font-family:'Liberation Mono',monospace;transform:scaleX(0.9306);transform-origin:0 0;white-space:pre;-webkit-text-stroke:0.12px currentColor;"><span style="color:#2484cc">WHERE</span><span style="color:#1c1c1c"> rollno = </span><span style="color:#c0893e">14</span><span style="color:#1c1c1c">;</span></div>
<div class="t" style="left:177.2px;top:273.66px;font-size:9.6px;line-height:9.6px;color:#4f7f9f;font-weight:400;font-family:'Liberation Mono',monospace;transform:scaleX(0.9306);transform-origin:0 0;-webkit-text-stroke:0.05px currentColor;">24</div>
<div class="t" style="left:217.4px;top:273.66px;font-size:9.6px;line-height:9.6px;color:#1c1c1c;font-weight:400;font-family:'Liberation Mono',monospace;transform:scaleX(0.9306);transform-origin:0 0;white-space:pre;-webkit-text-stroke:0.12px currentColor;"></div>
<div class="t" style="left:177.2px;top:289.84px;font-size:9.6px;line-height:9.6px;color:#4f7f9f;font-weight:400;font-family:'Liberation Mono',monospace;transform:scaleX(0.9306);transform-origin:0 0;-webkit-text-stroke:0.05px currentColor;">25</div>
<div class="t" style="left:217.4px;top:289.84px;font-size:9.6px;line-height:9.6px;color:#1c1c1c;font-weight:400;font-family:'Liberation Mono',monospace;transform:scaleX(0.9306);transform-origin:0 0;white-space:pre;-webkit-text-stroke:0.12px currentColor;"></div>
<div class="t" style="left:177.2px;top:306.02px;font-size:9.6px;line-height:9.6px;color:#4f7f9f;font-weight:400;font-family:'Liberation Mono',monospace;transform:scaleX(0.9306);transform-origin:0 0;-webkit-text-stroke:0.05px currentColor;">26</div>
<div class="t" style="left:217.4px;top:306.02px;font-size:9.6px;line-height:9.6px;color:#1c1c1c;font-weight:400;font-family:'Liberation Mono',monospace;transform:scaleX(0.9306);transform-origin:0 0;white-space:pre;-webkit-text-stroke:0.12px currentColor;"></div>
<div class="t" style="left:177.2px;top:322.20px;font-size:9.6px;line-height:9.6px;color:#4f7f9f;font-weight:400;font-family:'Liberation Mono',monospace;transform:scaleX(0.9306);transform-origin:0 0;-webkit-text-stroke:0.05px currentColor;">27</div>
<div class="t" style="left:217.4px;top:322.20px;font-size:9.6px;line-height:9.6px;color:#1c1c1c;font-weight:400;font-family:'Liberation Mono',monospace;transform:scaleX(0.9306);transform-origin:0 0;white-space:pre;-webkit-text-stroke:0.12px currentColor;"></div>
<div class="a" style="left:163px;top:324.5px;width:599.5px;height:5.1px;background:#ededf0;"></div>
<div class="a" style="left:163px;top:329.6px;width:599.5px;height:16.3px;background:#0a78d4;"></div>
<svg class="a" style="left:198.5px;top:335.5px" width="562" height="5"><defs><pattern id="p164" width="3" height="3" patternUnits="userSpaceOnUse"><rect x="0" y="0" width="1" height="1" fill="#3b90da"/><rect x="1.5" y="1.5" width="1" height="1" fill="#3b90da"/></pattern></defs><rect width="562" height="5" fill="url(#p164)"/></svg>
<div class="t" style="left:168.8px;top:333.47px;font-size:9.6px;line-height:9.6px;color:#ffffff;font-weight:400;font-family:'Liberation Sans',sans-serif;transform:scaleX(0.87);transform-origin:0 0;">Output</div>
<div class="a" style="left:163px;top:345.9px;width:599.5px;height:20.7px;background:#f0f0f2;"></div>
<svg class="a" style="left:168.5px;top:351px;" width="12" height="11" viewBox="0 0 12 11"><rect x="3.5" y="0.5" width="8" height="7.5" fill="#f0f0f2" stroke="#555"/><rect x="0.5" y="3" width="8" height="7.5" fill="#f0f0f2" stroke="#555"/></svg>
<div class="a" style="left:185px;top:349.4px;width:114.2px;height:15.6px;background:#ffffff;"></div>
<div class="a" style="left:290.8px;top:349.4px;width:8.4px;height:15.6px;background:#e4e4e6;"></div>
<div class="t" style="left:188.1px;top:352.74px;font-size:10px;line-height:10px;color:#1e1e1e;font-weight:400;font-family:'Liberation Sans',sans-serif;transform:scaleX(0.81);transform-origin:0 0;">Action Output</div>
<svg class="a" style="left:293.2px;top:356.2px;" width="3.4" height="2.4" viewBox="0 0 3.4 2.4"><path d="M0 0 H3.4 L1.7 2.4 Z" fill="#111"/></svg>
<div class="a" style="left:163.9px;top:366.6px;width:585.1px;height:88.1px;background:#ffffff;"></div>
<div class="a" style="left:163.9px;top:380.8px;width:585.1px;height:16.69999999999999px;background:#edf3fc;"></div>
<div class="a" style="left:163.9px;top:414.6px;width:585.1px;height:16.899999999999977px;background:#edf3fc;"></div>
<div class="a" style="left:163.9px;top:431.5px;width:585.1px;height:16.19999999999999px;background:#0a78d4;"></div>
<div class="a" style="left:179.5px;top:366.6px;width:1px;height:14.199999999999989px;background:#e6e6e8;"></div>
<div class="a" style="left:179.5px;top:380.8px;width:1px;height:16.69999999999999px;background:#ffffff;"></div>
<div class="a" style="left:179.5px;top:397.5px;width:1px;height:17.100000000000023px;background:#f7f7f8;"></div>
<div class="a" style="left:179.5px;top:414.6px;width:1px;height:16.899999999999977px;background:#ffffff;"></div>
<div class="a" style="left:179.5px;top:431.5px;width:1px;height:16.19999999999999px;background:#5fa3e3;"></div>
<div class="a" style="left:207.3px;top:366.6px;width:1px;height:14.199999999999989px;background:#e6e6e8;"></div>
<div class="a" style="left:207.3px;top:380.8px;width:1px;height:16.69999999999999px;background:#ffffff;"></div>
<div class="a" style="left:207.3px;top:397.5px;width:1px;height:17.100000000000023px;background:#f7f7f8;"></div>
<div class="a" style="left:207.3px;top:414.6px;width:1px;height:16.899999999999977px;background:#ffffff;"></div>
<div class="a" style="left:207.3px;top:431.5px;width:1px;height:16.19999999999999px;background:#5fa3e3;"></div>
<div class="a" style="left:246.5px;top:366.6px;width:1px;height:14.199999999999989px;background:#e6e6e8;"></div>
<div class="a" style="left:246.5px;top:380.8px;width:1px;height:16.69999999999999px;background:#ffffff;"></div>
<div class="a" style="left:246.5px;top:397.5px;width:1px;height:17.100000000000023px;background:#f7f7f8;"></div>
<div class="a" style="left:246.5px;top:414.6px;width:1px;height:16.899999999999977px;background:#ffffff;"></div>
<div class="a" style="left:246.5px;top:431.5px;width:1px;height:16.19999999999999px;background:#5fa3e3;"></div>
<div class="a" style="left:454.4px;top:366.6px;width:1px;height:14.199999999999989px;background:#e6e6e8;"></div>
<div class="a" style="left:454.4px;top:380.8px;width:1px;height:16.69999999999999px;background:#ffffff;"></div>
<div class="a" style="left:454.4px;top:397.5px;width:1px;height:17.100000000000023px;background:#f7f7f8;"></div>
<div class="a" style="left:454.4px;top:414.6px;width:1px;height:16.899999999999977px;background:#ffffff;"></div>
<div class="a" style="left:454.4px;top:431.5px;width:1px;height:16.19999999999999px;background:#5fa3e3;"></div>
<div class="a" style="left:662.4px;top:366.6px;width:1px;height:14.199999999999989px;background:#e6e6e8;"></div>
<div class="a" style="left:662.4px;top:380.8px;width:1px;height:16.69999999999999px;background:#ffffff;"></div>
<div class="a" style="left:662.4px;top:397.5px;width:1px;height:17.100000000000023px;background:#f7f7f8;"></div>
<div class="a" style="left:662.4px;top:414.6px;width:1px;height:16.899999999999977px;background:#ffffff;"></div>
<div class="a" style="left:662.4px;top:431.5px;width:1px;height:16.19999999999999px;background:#5fa3e3;"></div>
<div class="t" style="left:185.4px;top:370.91px;font-size:7.9px;line-height:7.9px;color:#1e1e1e;font-weight:400;font-family:'Liberation Sans',sans-serif;transform:scaleX(0.97);transform-origin:0 0;">#</div>
<div class="t" style="left:212.5px;top:370.91px;font-size:7.9px;line-height:7.9px;color:#1e1e1e;font-weight:400;font-family:'Liberation Sans',sans-serif;transform:scaleX(0.97);transform-origin:0 0;">Time</div>
<div class="t" style="left:251.7px;top:370.91px;font-size:7.9px;line-height:7.9px;color:#1e1e1e;font-weight:400;font-family:'Liberation Sans',sans-serif;transform:scaleX(0.97);transform-origin:0 0;">Action</div>
<div class="t" style="left:459.8px;top:370.91px;font-size:7.9px;line-height:7.9px;color:#1e1e1e;font-weight:400;font-family:'Liberation Sans',sans-serif;transform:scaleX(0.97);transform-origin:0 0;">Message</div>
<div class="t" style="left:667.4px;top:370.91px;font-size:7.9px;line-height:7.9px;color:#1e1e1e;font-weight:400;font-family:'Liberation Sans',sans-serif;transform:scaleX(0.97);transform-origin:0 0;">Duration / Fetch</div>
<svg class="a" style="left:167px;top:384.3px;" width="9.5" height="9.5" viewBox="0 0 9.5 9.5"><circle cx="4.75" cy="4.75" r="4.5" fill="#c8202a"/><path d="M3 3 L6.5 6.5 M6.5 3 L3 6.5" stroke="#fff" stroke-width="1.3"/></svg>
<div class="t" style="left:194.6px;top:383.29px;font-size:9.7px;line-height:9.7px;color:#1e1e1e;font-weight:400;font-family:'Liberation Sans',sans-serif;transform:scaleX(0.8533);transform-origin:0 0;">14</div>
<div class="t" style="left:210.4px;top:383.29px;font-size:9.7px;line-height:9.7px;color:#1e1e1e;font-weight:400;font-family:'Liberation Sans',sans-serif;transform:scaleX(0.8821);transform-origin:0 0;">11:32:00</div>
<div class="t" style="left:249.6px;top:383.29px;font-size:9.7px;line-height:9.7px;color:#1e1e1e;font-weight:400;font-family:'Liberation Sans',sans-serif;transform:scaleX(0.8485);transform-origin:0 0;">UPDATE students SET age = 21 WHERE rollno = 14</div>
<div class="t" style="left:457.5px;top:383.29px;font-size:9.7px;line-height:9.7px;color:#1e1e1e;font-weight:400;font-family:'Liberation Sans',sans-serif;transform:scaleX(0.8399);transform-origin:0 0;white-space:pre;">Error Code: 1175. You are using safe update mode an...</div>
<div class="t" style="left:665.5px;top:383.29px;font-size:9.7px;line-height:9.7px;color:#1e1e1e;font-weight:400;font-family:'Liberation Sans',sans-serif;transform:scaleX(0.8485);transform-origin:0 0;">0.000 sec</div>
<svg class="a" style="left:167px;top:401.0px;" width="9.5" height="9.5" viewBox="0 0 9.5 9.5"><circle cx="4.75" cy="4.75" r="4.5" fill="#22a33a" stroke="#fff" stroke-width="0.4"/><path d="M2.4 4.9 L4.2 6.6 L7.2 3.4" stroke="#fff" stroke-width="1.3" fill="none"/></svg>
<div class="t" style="left:194.6px;top:400.29px;font-size:9.7px;line-height:9.7px;color:#1e1e1e;font-weight:400;font-family:'Liberation Sans',sans-serif;transform:scaleX(0.8533);transform-origin:0 0;">15</div>
<div class="t" style="left:210.4px;top:400.29px;font-size:9.7px;line-height:9.7px;color:#1e1e1e;font-weight:400;font-family:'Liberation Sans',sans-serif;transform:scaleX(0.8821);transform-origin:0 0;">11:40:28</div>
<div class="t" style="left:249.6px;top:400.29px;font-size:9.7px;line-height:9.7px;color:#1e1e1e;font-weight:400;font-family:'Liberation Sans',sans-serif;transform:scaleX(0.8485);transform-origin:0 0;">SET SQL_SAFE_UPDATES = 0</div>
<div class="t" style="left:457.5px;top:400.29px;font-size:9.7px;line-height:9.7px;color:#1e1e1e;font-weight:400;font-family:'Liberation Sans',sans-serif;transform:scaleX(0.8399);transform-origin:0 0;white-space:pre;">0 row(s) affected</div>
<div class="t" style="left:665.5px;top:400.29px;font-size:9.7px;line-height:9.7px;color:#1e1e1e;font-weight:400;font-family:'Liberation Sans',sans-serif;transform:scaleX(0.8485);transform-origin:0 0;">0.000 sec</div>
<svg class="a" style="left:167px;top:418.1px;" width="9.5" height="9.5" viewBox="0 0 9.5 9.5"><circle cx="4.75" cy="4.75" r="4.5" fill="#22a33a" stroke="#fff" stroke-width="0.4"/><path d="M2.4 4.9 L4.2 6.6 L7.2 3.4" stroke="#fff" stroke-width="1.3" fill="none"/></svg>
<div class="t" style="left:194.6px;top:417.29px;font-size:9.7px;line-height:9.7px;color:#1e1e1e;font-weight:400;font-family:'Liberation Sans',sans-serif;transform:scaleX(0.8533);transform-origin:0 0;">16</div>
<div class="t" style="left:210.4px;top:417.29px;font-size:9.7px;line-height:9.7px;color:#1e1e1e;font-weight:400;font-family:'Liberation Sans',sans-serif;transform:scaleX(0.8821);transform-origin:0 0;">11:40:34</div>
<div class="t" style="left:249.6px;top:417.29px;font-size:9.7px;line-height:9.7px;color:#1e1e1e;font-weight:400;font-family:'Liberation Sans',sans-serif;transform:scaleX(0.8485);transform-origin:0 0;">SET SQL_SAFE_UPDATES = 0</div>
<div class="t" style="left:457.5px;top:417.29px;font-size:9.7px;line-height:9.7px;color:#1e1e1e;font-weight:400;font-family:'Liberation Sans',sans-serif;transform:scaleX(0.8399);transform-origin:0 0;white-space:pre;">0 row(s) affected</div>
<div class="t" style="left:665.5px;top:417.29px;font-size:9.7px;line-height:9.7px;color:#1e1e1e;font-weight:400;font-family:'Liberation Sans',sans-serif;transform:scaleX(0.8485);transform-origin:0 0;">0.000 sec</div>
<svg class="a" style="left:167px;top:435.0px;" width="9.5" height="9.5" viewBox="0 0 9.5 9.5"><circle cx="4.75" cy="4.75" r="4.5" fill="#22a33a" stroke="#fff" stroke-width="0.4"/><path d="M2.4 4.9 L4.2 6.6 L7.2 3.4" stroke="#fff" stroke-width="1.3" fill="none"/></svg>
<div class="t" style="left:194.6px;top:434.29px;font-size:9.7px;line-height:9.7px;color:#ffffff;font-weight:400;font-family:'Liberation Sans',sans-serif;transform:scaleX(0.8533);transform-origin:0 0;">17</div>
<div class="t" style="left:210.4px;top:434.29px;font-size:9.7px;line-height:9.7px;color:#ffffff;font-weight:400;font-family:'Liberation Sans',sans-serif;transform:scaleX(0.8821);transform-origin:0 0;">11:40:34</div>
<div class="t" style="left:249.6px;top:434.29px;font-size:9.7px;line-height:9.7px;color:#ffffff;font-weight:400;font-family:'Liberation Sans',sans-serif;transform:scaleX(0.8485);transform-origin:0 0;">UPDATE students SET age = 21 WHERE rollno = 14</div>
<div class="t" style="left:457.5px;top:434.29px;font-size:9.7px;line-height:9.7px;color:#ffffff;font-weight:400;font-family:'Liberation Sans',sans-serif;transform:scaleX(0.8399);transform-origin:0 0;white-space:pre;">1 row(s) affected Rows matched: 1  Changed: 1  War...</div>
<div class="t" style="left:665.5px;top:434.29px;font-size:9.7px;line-height:9.7px;color:#ffffff;font-weight:400;font-family:'Liberation Sans',sans-serif;transform:scaleX(0.8485);transform-origin:0 0;">0.015 sec</div>
<div class="a" style="left:749px;top:366.6px;width:13px;height:88.1px;background:#efeff1;"></div>
<svg class="a" style="left:752.5px;top:371.5px;" width="7" height="5" viewBox="0 0 7 5"><path d="M0.7 4.3 L3.5 1.2 L6.3 4.3" stroke="#333" stroke-width="1.3" fill="none"/></svg>
<svg class="a" style="left:752.5px;top:446.5px;" width="7" height="5" viewBox="0 0 7 5"><path d="M0.7 0.7 L3.5 3.8 L6.3 0.7" stroke="#333" stroke-width="1.3" fill="none"/></svg>
<div class="a" style="left:750.7px;top:426.8px;width:10.9px;height:15.8px;background:#cdcdcd;"></div>
</body></html>
